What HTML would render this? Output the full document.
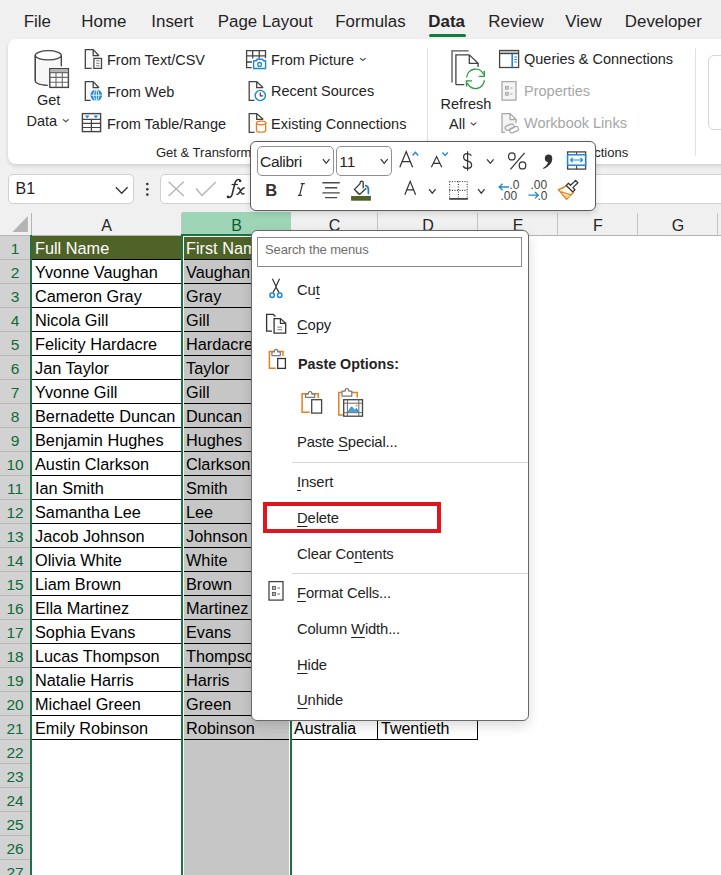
<!DOCTYPE html>
<html><head><meta charset="utf-8"><style>
html,body{margin:0;padding:0}
body{width:721px;height:875px;overflow:hidden;position:relative;background:#f0f0f0;font-family:"Liberation Sans", sans-serif}
.t{position:absolute;white-space:nowrap;line-height:1}
.b{position:absolute}
u{text-decoration-thickness:1px;text-underline-offset:2.5px}
</style></head><body>
<div class="t" style="left:23.8px;top:13.5px;font-size:16.9px;color:#242424;font-weight:400;">File</div>
<div class="t" style="left:81.3px;top:13.5px;font-size:16.9px;color:#242424;font-weight:400;">Home</div>
<div class="t" style="left:151.3px;top:13.5px;font-size:16.9px;color:#242424;font-weight:400;">Insert</div>
<div class="t" style="left:217.8px;top:13.5px;font-size:16.9px;color:#242424;font-weight:400;">Page Layout</div>
<div class="t" style="left:335.3px;top:13.5px;font-size:16.9px;color:#242424;font-weight:400;">Formulas</div>
<div class="t" style="left:428.3px;top:13.5px;font-size:16.9px;color:#242424;font-weight:700;">Data</div>
<div class="t" style="left:488.3px;top:13.5px;font-size:16.9px;color:#242424;font-weight:400;">Review</div>
<div class="t" style="left:565.3px;top:13.5px;font-size:16.9px;color:#242424;font-weight:400;">View</div>
<div class="t" style="left:624.8px;top:13.5px;font-size:16.9px;color:#242424;font-weight:400;">Developer</div>
<div class="b" style="left:429px;top:34px;width:37px;height:3px;background:#107c41;border-radius:2px"></div>
<div class="b" style="left:8px;top:39px;width:760px;height:125px;background:#fff;border-radius:8px;box-shadow:0 2px 4px rgba(0,0,0,0.13)"></div>
<div class="t" style="left:37.0px;top:93.2px;font-size:14.5px;color:#242424;font-weight:400;">Get</div>
<div class="t" style="left:26.5px;top:113.7px;font-size:14.5px;color:#242424;font-weight:400;">Data</div>
<div class="t" style="left:107.0px;top:52.7px;font-size:14.5px;color:#242424;font-weight:400;">From Text/CSV</div>
<div class="t" style="left:107.0px;top:85.0px;font-size:14.5px;color:#242424;font-weight:400;">From Web</div>
<div class="t" style="left:107.0px;top:116.7px;font-size:14.5px;color:#242424;font-weight:400;">From Table/Range</div>
<div class="t" style="left:271.0px;top:52.7px;font-size:14.5px;color:#242424;font-weight:400;">From Picture</div>
<div class="t" style="left:271.0px;top:84.4px;font-size:14.5px;color:#242424;font-weight:400;">Recent Sources</div>
<div class="t" style="left:271.0px;top:116.9px;font-size:14.5px;color:#242424;font-weight:400;">Existing Connections</div>
<div class="t" style="left:156.0px;top:145.7px;font-size:13px;color:#242424;font-weight:400;">Get &amp; Transform Data</div>
<div class="t" style="left:440.5px;top:97.0px;font-size:14.5px;color:#242424;font-weight:400;">Refresh</div>
<div class="t" style="left:449.0px;top:116.7px;font-size:14.5px;color:#242424;font-weight:400;">All</div>
<div class="t" style="left:524.0px;top:51.9px;font-size:14.5px;color:#242424;font-weight:400;">Queries &amp; Connections</div>
<div class="t" style="left:524.0px;top:84.2px;font-size:14.5px;color:#a6a6a6;font-weight:400;">Properties</div>
<div class="t" style="left:524.0px;top:116.2px;font-size:14.5px;color:#a6a6a6;font-weight:400;">Workbook Links</div>
<div class="t" style="left:494.5px;top:145.5px;font-size:13px;color:#242424;font-weight:400;">Queries &amp; Connections</div>
<div class="b" style="left:427px;top:48px;width:1px;height:108px;background:#e1e1e1"></div>
<div class="b" style="left:695px;top:48px;width:1px;height:108px;background:#e1e1e1"></div>
<div class="b" style="left:708px;top:55px;width:40px;height:73px;border:1px solid #d6d6d6;border-radius:6px;background:#fff"></div>
<svg class="b" style="left:0px;top:0px;" width="721" height="875" viewBox="0 0 721 875"><path d="M35.3 55.3 V81 Q35.6 84.6 47.7 85.3 M61.3 55.3 V66.3" fill="none" stroke="#444" stroke-width="1.3"/><path d="M35.3 55.3 V81 Q35.6 84.6 47.7 85.3 L49.5 85.3 V68.5 L61.3 68.5 V55.3 Z" fill="#f7f7f7" stroke="none"/><path d="M35.3 55.3 V81 Q35.6 84.6 47.7 85.3 M61.3 55.3 V66.3" fill="none" stroke="#444" stroke-width="1.3"/><ellipse cx="48.3" cy="55.3" rx="13" ry="4.6" fill="#fff" stroke="#444" stroke-width="1.3"/><rect x="49.8" y="68.7" width="18.6" height="18.7" fill="#fff" stroke="#444" stroke-width="1.4"/><rect x="50.5" y="69.4" width="17.2" height="3" fill="#b5b5b5"/><path d="M50 72.6 H68.2 M50 77.4 H68.2 M50 82.2 H68.2 M56 72.6 V87 M62.3 72.6 V87" stroke="#6a6a6a" stroke-width="1.1" fill="none"/><path d="M85.3 68.3 V49.6 H93.2 L99 55.7 V68.3 H85.3 Z" fill="#f9f9f9" stroke="none"/><path d="M91.7 68.3 H85.3 V49.6 H93.2 L99 55.7 M93.2 49.6 V55.7 H99" fill="none" stroke="#444" stroke-width="1.3" stroke-linejoin="miter"/><rect x="93.9" y="58.4" width="7.6" height="10" fill="#fff" stroke="#444" stroke-width="1.3"/><path d="M96.2 60.8 H99.5 M96.2 63.3 H99.5 M96.2 65.8 H99.5" stroke="#777" stroke-width="1.1"/><path d="M85.3 100.3 V81.6 H93.2 L99 87.7 V100.3 H85.3 Z" fill="#f9f9f9" stroke="none"/><path d="M90.7 100.3 H85.3 V81.6 H93.2 L99 87.7 M93.2 81.6 V87.7 H99" fill="none" stroke="#444" stroke-width="1.3" stroke-linejoin="miter"/><circle cx="96.3" cy="95.2" r="5.8" fill="#1f86d4"/><path d="M90.8 95.2 H101.8 M96.3 89.6 V100.8" stroke="#fff" stroke-width="0.9"/><ellipse cx="96.3" cy="95.2" rx="2.6" ry="5.6" fill="none" stroke="#fff" stroke-width="0.9"/><rect x="82.4" y="113.6" width="18.2" height="18" fill="#fff" stroke="#444" stroke-width="1.4"/><path d="M82.4 119.3 H100.6 M82.4 123.4 H100.6 M82.4 127.5 H100.6 M91.4 119.3 V131.6" stroke="#444" stroke-width="1.2"/><path d="M84.8 115.6 H89.6 L87.2 118.2 Z M93.5 115.6 H98.3 L95.9 118.2 Z" fill="#1f86d4"/><path d="M251.7 67.6 H246.6 V50.6 H265.5 V58 M246.6 55.9 H265.5 M252.7 50.6 V58.5 M259.2 50.6 V58.5 M246.6 62 H252" fill="none" stroke="#444" stroke-width="1.3"/><path d="M253.6 60.8 H256.3 L257.2 59.2 H262.5 L263.4 60.8 H265.6 V68.5 H253.6 Z" fill="#fff" stroke="#1f86d4" stroke-width="1.4" stroke-linejoin="round"/><circle cx="259.6" cy="64.4" r="1.9" fill="none" stroke="#1f86d4" stroke-width="1.3"/><path d="M249.2 100.3 V81.6 H256.7 L263.2 87.7 V100.3 H249.2 Z" fill="#f9f9f9" stroke="none"/><path d="M254.5 100.3 H249.2 V81.6 H256.7 L263.2 87.7 M256.7 81.6 V87.7 H263.2" fill="none" stroke="#444" stroke-width="1.3" stroke-linejoin="miter"/><circle cx="260.3" cy="95.5" r="5.1" fill="#fff" stroke="#1f86d4" stroke-width="1.4"/><path d="M260.3 92.5 V95.8 H263" fill="none" stroke="#444" stroke-width="1.2"/><path d="M249.2 132.3 V113.6 H256.7 L263.2 119.3 V132.3 H249.2 Z" fill="#f9f9f9" stroke="none"/><path d="M254.5 132.3 H249.2 V113.6 H256.7 L263.2 119.3 M256.7 113.6 V119.3 H263.2" fill="none" stroke="#444" stroke-width="1.3" stroke-linejoin="miter"/><path d="M256.5 123 V130.5 Q256.5 132.2 261.1 132.2 Q265.7 132.2 265.7 130.5 V123 Z" fill="#fff" stroke="#e67e22" stroke-width="1.3"/><ellipse cx="261.1" cy="123" rx="4.6" ry="1.8" fill="#fff" stroke="#e67e22" stroke-width="1.3"/><path d="M452 82.5 V50.9 H468.6" fill="none" stroke="#555" stroke-width="1.3"/><path d="M455.9 84.7 V54.8 H469.3 L478.1 63.3 V67 M469.3 54.8 V63.3 H478.1 M455.9 84.7 H464.3" fill="none" stroke="#444" stroke-width="1.3"/><path d="M466.7 77.5 A8.8 8.8 0 0 1 483.6 74.5 M484.3 80.3 A8.8 8.8 0 0 1 467.3 83" fill="none" stroke="#2e9a48" stroke-width="1.4"/><path d="M484.3 70.8 V76.4 H478.8 M466.5 86.5 V80.9 H472" fill="none" stroke="#2e9a48" stroke-width="1.4"/><rect x="499.6" y="50.5" width="19" height="17" fill="#fff" stroke="#444" stroke-width="1.3"/><rect x="500.3" y="51.2" width="17.6" height="2.3" fill="#b5b5b5"/><path d="M499.6 53.6 H518.6" stroke="#444" stroke-width="1.2"/><path d="M512.2 54 V67.3" stroke="#1f86d4" stroke-width="1.6"/><path d="M514.3 57 H516.9 M514.3 59.5 H516.9 M514.3 62 H516.9" stroke="#1f86d4" stroke-width="1.1"/><rect x="502" y="81.6" width="14" height="18.5" fill="#f4f4f4" stroke="#a8a8a8" stroke-width="1.3"/><rect x="505.5" y="86.4" width="2.8" height="2.8" fill="#ccc" stroke="#a8a8a8" stroke-width="0.9"/><rect x="505.5" y="92.4" width="2.8" height="2.8" fill="#ccc" stroke="#a8a8a8" stroke-width="0.9"/><path d="M510.2 88 H512.6 M510.2 94 H512.6" stroke="#a8a8a8" stroke-width="1.1"/><path d="M505 132.3 H502 V113.6 H510.1 L516.1 119.5 V123.3 M510.1 113.6 V119.5 H516.1" fill="#f4f4f4" stroke="#a8a8a8" stroke-width="1.3"/><rect x="-4.6" y="-2.3" width="9.2" height="4.6" rx="2.3" fill="none" stroke="#a8a8a8" stroke-width="1.2" transform="translate(509.6 127.1) rotate(-22)"/><rect x="-4.6" y="-2.3" width="9.2" height="4.6" rx="2.3" fill="none" stroke="#a8a8a8" stroke-width="1.2" transform="translate(514 129.6) rotate(-22)"/><path d="M63.0 119.3 L65.8 121.7 L68.6 119.3" fill="none" stroke="#444" stroke-width="1.1"/><path d="M360.0 58.099999999999994 L362.8 60.5 L365.6 58.099999999999994" fill="none" stroke="#444" stroke-width="1.1"/><path d="M470.7 122.6 L473.5 125.0 L476.3 122.6" fill="none" stroke="#444" stroke-width="1.1"/></svg>
<div class="b" style="left:8px;top:174px;width:126px;height:30px;background:#fff;border:1px solid #d1d1d1;border-radius:5px;box-sizing:border-box"></div>
<div class="t" style="left:15.5px;top:181.3px;font-size:16px;color:#242424;font-weight:400;">B1</div>
<div class="b" style="left:160px;top:174px;width:600px;height:30px;background:#fff;border:1px solid #d1d1d1;border-radius:5px;box-sizing:border-box"></div>
<svg class="b" style="left:0px;top:0px;" width="721" height="875" viewBox="0 0 721 875"><path d="M115.8 187.2 L121.7 193.2 L127.6 187.2" fill="none" stroke="#333" stroke-width="1.3"/><circle cx="147.3" cy="184" r="1.3" fill="#333"/><circle cx="147.3" cy="189.3" r="1.3" fill="#333"/><circle cx="147.3" cy="194.6" r="1.3" fill="#333"/><path d="M168.6 181.8 L183.8 196 M183.8 181.8 L168.6 196" stroke="#b3b3b3" stroke-width="1.3"/><path d="M196 188.5 L202 195.5 L215.8 182" fill="none" stroke="#b3b3b3" stroke-width="1.3"/></svg>
<svg class="b" style="left:0px;top:0px;" width="721" height="875" viewBox="0 0 721 875"><path d="M240.6 181.4 Q240.4 179.4 238.4 179.5 Q235.6 179.7 234.6 184.5 L232.3 193.8 Q231.3 197.6 228.6 197.6 Q227.5 197.6 227.4 196.6" fill="none" stroke="#2b2b2b" stroke-width="1.5"/><circle cx="240.1" cy="180.9" r="1.2" fill="#2b2b2b"/><circle cx="228" cy="196.8" r="1.2" fill="#2b2b2b"/><path d="M231.6 184.5 H237.8" stroke="#2b2b2b" stroke-width="1.2"/><path d="M237.3 188.4 Q239 187.3 239.9 189.5 L241.4 193 Q242.3 194.8 244.5 193.5 M244.8 188.2 Q243.4 187.5 242.2 189 L238.6 193.5 Q237.5 194.8 236.5 194.2" fill="none" stroke="#2b2b2b" stroke-width="1.4"/></svg>
<div class="b" style="left:0px;top:212px;width:721px;height:24px;background:#f0f0f0"></div>
<div class="b" style="left:181px;top:213px;width:1px;height:22px;background:#c4c4c4"></div>
<div class="t" style="left:31px;width:151px;top:217.5px;font-size:16px;color:#242424;text-align:center">A</div>
<div class="b" style="left:182px;top:212px;width:109px;height:22px;background:#9fd5b7"></div>
<div class="t" style="left:182px;width:109px;top:217.5px;font-size:16px;color:#0f5c30;text-align:center">B</div>
<div class="b" style="left:377px;top:213px;width:1px;height:22px;background:#c4c4c4"></div>
<div class="t" style="left:291px;width:87px;top:217.5px;font-size:16px;color:#242424;text-align:center">C</div>
<div class="b" style="left:477px;top:213px;width:1px;height:22px;background:#c4c4c4"></div>
<div class="t" style="left:378px;width:100px;top:217.5px;font-size:16px;color:#242424;text-align:center">D</div>
<div class="b" style="left:557px;top:213px;width:1px;height:22px;background:#c4c4c4"></div>
<div class="t" style="left:478px;width:80px;top:217.5px;font-size:16px;color:#242424;text-align:center">E</div>
<div class="b" style="left:637px;top:213px;width:1px;height:22px;background:#c4c4c4"></div>
<div class="t" style="left:558px;width:80px;top:217.5px;font-size:16px;color:#242424;text-align:center">F</div>
<div class="b" style="left:717px;top:213px;width:1px;height:22px;background:#c4c4c4"></div>
<div class="t" style="left:638px;width:80px;top:217.5px;font-size:16px;color:#242424;text-align:center">G</div>
<div class="b" style="left:799px;top:213px;width:1px;height:22px;background:#c4c4c4"></div>
<div class="b" style="left:0px;top:235px;width:721px;height:1px;background:#b4b4b4"></div>
<svg class="b" style="left:0px;top:0px;" width="40" height="240" viewBox="0 0 40 240"><path d="M27.9 216.1 V232 H12.5 Z" fill="#b4b4b4"/></svg>
<div class="b" style="left:31px;top:213px;width:1px;height:22px;background:#b4b4b4"></div>
<div class="b" style="left:0px;top:236px;width:30px;height:640px;background:#d2d2d2"></div>
<div class="b" style="left:32px;top:236px;width:721px;height:640px;background:#fff"></div>
<div class="b" style="left:183px;top:236px;width:107px;height:640px;background:#fff"></div>
<div class="b" style="left:184px;top:237px;width:105px;height:640px;background:#c6c6c6"></div>
<div class="b" style="left:0px;top:259px;width:30px;height:1px;background:#b8b8b8"></div>
<div class="t" style="left:0px;width:30px;top:241.2px;font-size:15.5px;color:#0e6b38;text-align:center">1</div>
<div class="b" style="left:32px;top:236px;width:150px;height:23px;background:#4f6228"></div>
<div class="b" style="left:184px;top:237px;width:105px;height:22px;background:#4f6228"></div>
<div class="b" style="left:32px;top:259px;width:150px;height:1px;background:#000"></div>
<div class="b" style="left:184px;top:259px;width:105px;height:1px;background:#000"></div>
<div class="t" style="left:35.0px;top:240.3px;font-size:16.3px;color:#fff;font-weight:400;">Full Name</div>
<div class="t" style="left:186px;width:104px;overflow:hidden;top:240.3px;font-size:16.3px;color:#fff">First Name</div>
<div class="b" style="left:0px;top:283px;width:30px;height:1px;background:#b8b8b8"></div>
<div class="t" style="left:0px;width:30px;top:265.2px;font-size:15.5px;color:#0e6b38;text-align:center">2</div>
<div class="b" style="left:32px;top:283px;width:150px;height:1px;background:#000"></div>
<div class="b" style="left:184px;top:283px;width:105px;height:1px;background:#000"></div>
<div class="t" style="left:35.0px;top:264.3px;font-size:16.3px;color:#000;font-weight:400;">Yvonne Vaughan</div>
<div class="t" style="left:186px;width:104px;overflow:hidden;top:264.3px;font-size:16.3px;color:#000">Vaughan</div>
<div class="b" style="left:0px;top:307px;width:30px;height:1px;background:#b8b8b8"></div>
<div class="t" style="left:0px;width:30px;top:289.2px;font-size:15.5px;color:#0e6b38;text-align:center">3</div>
<div class="b" style="left:32px;top:307px;width:150px;height:1px;background:#000"></div>
<div class="b" style="left:184px;top:307px;width:105px;height:1px;background:#000"></div>
<div class="t" style="left:35.0px;top:288.3px;font-size:16.3px;color:#000;font-weight:400;">Cameron Gray</div>
<div class="t" style="left:186px;width:104px;overflow:hidden;top:288.3px;font-size:16.3px;color:#000">Gray</div>
<div class="b" style="left:0px;top:331px;width:30px;height:1px;background:#b8b8b8"></div>
<div class="t" style="left:0px;width:30px;top:313.2px;font-size:15.5px;color:#0e6b38;text-align:center">4</div>
<div class="b" style="left:32px;top:331px;width:150px;height:1px;background:#000"></div>
<div class="b" style="left:184px;top:331px;width:105px;height:1px;background:#000"></div>
<div class="t" style="left:35.0px;top:312.3px;font-size:16.3px;color:#000;font-weight:400;">Nicola Gill</div>
<div class="t" style="left:186px;width:104px;overflow:hidden;top:312.3px;font-size:16.3px;color:#000">Gill</div>
<div class="b" style="left:0px;top:355px;width:30px;height:1px;background:#b8b8b8"></div>
<div class="t" style="left:0px;width:30px;top:337.2px;font-size:15.5px;color:#0e6b38;text-align:center">5</div>
<div class="b" style="left:32px;top:355px;width:150px;height:1px;background:#000"></div>
<div class="b" style="left:184px;top:355px;width:105px;height:1px;background:#000"></div>
<div class="t" style="left:35.0px;top:336.3px;font-size:16.3px;color:#000;font-weight:400;">Felicity Hardacre</div>
<div class="t" style="left:186px;width:104px;overflow:hidden;top:336.3px;font-size:16.3px;color:#000">Hardacre</div>
<div class="b" style="left:0px;top:379px;width:30px;height:1px;background:#b8b8b8"></div>
<div class="t" style="left:0px;width:30px;top:361.2px;font-size:15.5px;color:#0e6b38;text-align:center">6</div>
<div class="b" style="left:32px;top:379px;width:150px;height:1px;background:#000"></div>
<div class="b" style="left:184px;top:379px;width:105px;height:1px;background:#000"></div>
<div class="t" style="left:35.0px;top:360.3px;font-size:16.3px;color:#000;font-weight:400;">Jan Taylor</div>
<div class="t" style="left:186px;width:104px;overflow:hidden;top:360.3px;font-size:16.3px;color:#000">Taylor</div>
<div class="b" style="left:0px;top:403px;width:30px;height:1px;background:#b8b8b8"></div>
<div class="t" style="left:0px;width:30px;top:385.2px;font-size:15.5px;color:#0e6b38;text-align:center">7</div>
<div class="b" style="left:32px;top:403px;width:150px;height:1px;background:#000"></div>
<div class="b" style="left:184px;top:403px;width:105px;height:1px;background:#000"></div>
<div class="t" style="left:35.0px;top:384.3px;font-size:16.3px;color:#000;font-weight:400;">Yvonne Gill</div>
<div class="t" style="left:186px;width:104px;overflow:hidden;top:384.3px;font-size:16.3px;color:#000">Gill</div>
<div class="b" style="left:0px;top:427px;width:30px;height:1px;background:#b8b8b8"></div>
<div class="t" style="left:0px;width:30px;top:409.2px;font-size:15.5px;color:#0e6b38;text-align:center">8</div>
<div class="b" style="left:32px;top:427px;width:150px;height:1px;background:#000"></div>
<div class="b" style="left:184px;top:427px;width:105px;height:1px;background:#000"></div>
<div class="t" style="left:35.0px;top:408.3px;font-size:16.3px;color:#000;font-weight:400;">Bernadette Duncan</div>
<div class="t" style="left:186px;width:104px;overflow:hidden;top:408.3px;font-size:16.3px;color:#000">Duncan</div>
<div class="b" style="left:0px;top:451px;width:30px;height:1px;background:#b8b8b8"></div>
<div class="t" style="left:0px;width:30px;top:433.2px;font-size:15.5px;color:#0e6b38;text-align:center">9</div>
<div class="b" style="left:32px;top:451px;width:150px;height:1px;background:#000"></div>
<div class="b" style="left:184px;top:451px;width:105px;height:1px;background:#000"></div>
<div class="t" style="left:35.0px;top:432.3px;font-size:16.3px;color:#000;font-weight:400;">Benjamin Hughes</div>
<div class="t" style="left:186px;width:104px;overflow:hidden;top:432.3px;font-size:16.3px;color:#000">Hughes</div>
<div class="b" style="left:0px;top:475px;width:30px;height:1px;background:#b8b8b8"></div>
<div class="t" style="left:0px;width:30px;top:457.2px;font-size:15.5px;color:#0e6b38;text-align:center">10</div>
<div class="b" style="left:32px;top:475px;width:150px;height:1px;background:#000"></div>
<div class="b" style="left:184px;top:475px;width:105px;height:1px;background:#000"></div>
<div class="t" style="left:35.0px;top:456.3px;font-size:16.3px;color:#000;font-weight:400;">Austin Clarkson</div>
<div class="t" style="left:186px;width:104px;overflow:hidden;top:456.3px;font-size:16.3px;color:#000">Clarkson</div>
<div class="b" style="left:0px;top:499px;width:30px;height:1px;background:#b8b8b8"></div>
<div class="t" style="left:0px;width:30px;top:481.2px;font-size:15.5px;color:#0e6b38;text-align:center">11</div>
<div class="b" style="left:32px;top:499px;width:150px;height:1px;background:#000"></div>
<div class="b" style="left:184px;top:499px;width:105px;height:1px;background:#000"></div>
<div class="t" style="left:35.0px;top:480.3px;font-size:16.3px;color:#000;font-weight:400;">Ian Smith</div>
<div class="t" style="left:186px;width:104px;overflow:hidden;top:480.3px;font-size:16.3px;color:#000">Smith</div>
<div class="b" style="left:0px;top:523px;width:30px;height:1px;background:#b8b8b8"></div>
<div class="t" style="left:0px;width:30px;top:505.2px;font-size:15.5px;color:#0e6b38;text-align:center">12</div>
<div class="b" style="left:32px;top:523px;width:150px;height:1px;background:#000"></div>
<div class="b" style="left:184px;top:523px;width:105px;height:1px;background:#000"></div>
<div class="t" style="left:35.0px;top:504.3px;font-size:16.3px;color:#000;font-weight:400;">Samantha Lee</div>
<div class="t" style="left:186px;width:104px;overflow:hidden;top:504.3px;font-size:16.3px;color:#000">Lee</div>
<div class="b" style="left:0px;top:547px;width:30px;height:1px;background:#b8b8b8"></div>
<div class="t" style="left:0px;width:30px;top:529.2px;font-size:15.5px;color:#0e6b38;text-align:center">13</div>
<div class="b" style="left:32px;top:547px;width:150px;height:1px;background:#000"></div>
<div class="b" style="left:184px;top:547px;width:105px;height:1px;background:#000"></div>
<div class="t" style="left:35.0px;top:528.3px;font-size:16.3px;color:#000;font-weight:400;">Jacob Johnson</div>
<div class="t" style="left:186px;width:104px;overflow:hidden;top:528.3px;font-size:16.3px;color:#000">Johnson</div>
<div class="b" style="left:0px;top:571px;width:30px;height:1px;background:#b8b8b8"></div>
<div class="t" style="left:0px;width:30px;top:553.2px;font-size:15.5px;color:#0e6b38;text-align:center">14</div>
<div class="b" style="left:32px;top:571px;width:150px;height:1px;background:#000"></div>
<div class="b" style="left:184px;top:571px;width:105px;height:1px;background:#000"></div>
<div class="t" style="left:35.0px;top:552.3px;font-size:16.3px;color:#000;font-weight:400;">Olivia White</div>
<div class="t" style="left:186px;width:104px;overflow:hidden;top:552.3px;font-size:16.3px;color:#000">White</div>
<div class="b" style="left:0px;top:595px;width:30px;height:1px;background:#b8b8b8"></div>
<div class="t" style="left:0px;width:30px;top:577.2px;font-size:15.5px;color:#0e6b38;text-align:center">15</div>
<div class="b" style="left:32px;top:595px;width:150px;height:1px;background:#000"></div>
<div class="b" style="left:184px;top:595px;width:105px;height:1px;background:#000"></div>
<div class="t" style="left:35.0px;top:576.3px;font-size:16.3px;color:#000;font-weight:400;">Liam Brown</div>
<div class="t" style="left:186px;width:104px;overflow:hidden;top:576.3px;font-size:16.3px;color:#000">Brown</div>
<div class="b" style="left:0px;top:619px;width:30px;height:1px;background:#b8b8b8"></div>
<div class="t" style="left:0px;width:30px;top:601.2px;font-size:15.5px;color:#0e6b38;text-align:center">16</div>
<div class="b" style="left:32px;top:619px;width:150px;height:1px;background:#000"></div>
<div class="b" style="left:184px;top:619px;width:105px;height:1px;background:#000"></div>
<div class="t" style="left:35.0px;top:600.3px;font-size:16.3px;color:#000;font-weight:400;">Ella Martinez</div>
<div class="t" style="left:186px;width:104px;overflow:hidden;top:600.3px;font-size:16.3px;color:#000">Martinez</div>
<div class="b" style="left:0px;top:643px;width:30px;height:1px;background:#b8b8b8"></div>
<div class="t" style="left:0px;width:30px;top:625.2px;font-size:15.5px;color:#0e6b38;text-align:center">17</div>
<div class="b" style="left:32px;top:643px;width:150px;height:1px;background:#000"></div>
<div class="b" style="left:184px;top:643px;width:105px;height:1px;background:#000"></div>
<div class="t" style="left:35.0px;top:624.3px;font-size:16.3px;color:#000;font-weight:400;">Sophia Evans</div>
<div class="t" style="left:186px;width:104px;overflow:hidden;top:624.3px;font-size:16.3px;color:#000">Evans</div>
<div class="b" style="left:0px;top:667px;width:30px;height:1px;background:#b8b8b8"></div>
<div class="t" style="left:0px;width:30px;top:649.2px;font-size:15.5px;color:#0e6b38;text-align:center">18</div>
<div class="b" style="left:32px;top:667px;width:150px;height:1px;background:#000"></div>
<div class="b" style="left:184px;top:667px;width:105px;height:1px;background:#000"></div>
<div class="t" style="left:35.0px;top:648.3px;font-size:16.3px;color:#000;font-weight:400;">Lucas Thompson</div>
<div class="t" style="left:186px;width:104px;overflow:hidden;top:648.3px;font-size:16.3px;color:#000">Thompson</div>
<div class="b" style="left:0px;top:691px;width:30px;height:1px;background:#b8b8b8"></div>
<div class="t" style="left:0px;width:30px;top:673.2px;font-size:15.5px;color:#0e6b38;text-align:center">19</div>
<div class="b" style="left:32px;top:691px;width:150px;height:1px;background:#000"></div>
<div class="b" style="left:184px;top:691px;width:105px;height:1px;background:#000"></div>
<div class="t" style="left:35.0px;top:672.3px;font-size:16.3px;color:#000;font-weight:400;">Natalie Harris</div>
<div class="t" style="left:186px;width:104px;overflow:hidden;top:672.3px;font-size:16.3px;color:#000">Harris</div>
<div class="b" style="left:0px;top:715px;width:30px;height:1px;background:#b8b8b8"></div>
<div class="t" style="left:0px;width:30px;top:697.2px;font-size:15.5px;color:#0e6b38;text-align:center">20</div>
<div class="b" style="left:32px;top:715px;width:150px;height:1px;background:#000"></div>
<div class="b" style="left:184px;top:715px;width:105px;height:1px;background:#000"></div>
<div class="t" style="left:35.0px;top:696.3px;font-size:16.3px;color:#000;font-weight:400;">Michael Green</div>
<div class="t" style="left:186px;width:104px;overflow:hidden;top:696.3px;font-size:16.3px;color:#000">Green</div>
<div class="b" style="left:0px;top:739px;width:30px;height:1px;background:#b8b8b8"></div>
<div class="t" style="left:0px;width:30px;top:721.2px;font-size:15.5px;color:#0e6b38;text-align:center">21</div>
<div class="b" style="left:32px;top:739px;width:150px;height:1px;background:#000"></div>
<div class="b" style="left:184px;top:739px;width:105px;height:1px;background:#000"></div>
<div class="t" style="left:35.0px;top:720.3px;font-size:16.3px;color:#000;font-weight:400;">Emily Robinson</div>
<div class="t" style="left:186px;width:104px;overflow:hidden;top:720.3px;font-size:16.3px;color:#000">Robinson</div>
<div class="b" style="left:0px;top:763px;width:30px;height:1px;background:#b8b8b8"></div>
<div class="t" style="left:0px;width:30px;top:745.2px;font-size:15.5px;color:#0e6b38;text-align:center">22</div>
<div class="b" style="left:0px;top:787px;width:30px;height:1px;background:#b8b8b8"></div>
<div class="t" style="left:0px;width:30px;top:769.2px;font-size:15.5px;color:#0e6b38;text-align:center">23</div>
<div class="b" style="left:0px;top:811px;width:30px;height:1px;background:#b8b8b8"></div>
<div class="t" style="left:0px;width:30px;top:793.2px;font-size:15.5px;color:#0e6b38;text-align:center">24</div>
<div class="b" style="left:0px;top:835px;width:30px;height:1px;background:#b8b8b8"></div>
<div class="t" style="left:0px;width:30px;top:817.2px;font-size:15.5px;color:#0e6b38;text-align:center">25</div>
<div class="b" style="left:0px;top:859px;width:30px;height:1px;background:#b8b8b8"></div>
<div class="t" style="left:0px;width:30px;top:841.2px;font-size:15.5px;color:#0e6b38;text-align:center">26</div>
<div class="b" style="left:0px;top:883px;width:30px;height:1px;background:#b8b8b8"></div>
<div class="t" style="left:0px;width:30px;top:865.2px;font-size:15.5px;color:#0e6b38;text-align:center">27</div>
<div class="b" style="left:291px;top:715px;width:187px;height:25px;border:1px solid #000;box-sizing:border-box;background:#fff"></div>
<div class="b" style="left:377px;top:715px;width:1px;height:25px;background:#000"></div>
<div class="t" style="left:294.0px;top:720.6px;font-size:16px;color:#000;font-weight:400;">Australia</div>
<div class="t" style="left:381.0px;top:720.6px;font-size:16px;color:#000;font-weight:400;">Twentieth</div>
<div class="b" style="left:30px;top:235px;width:2px;height:640px;background:#1a7342"></div>
<div class="b" style="left:181px;top:234px;width:111px;height:2px;background:#1a7342"></div>
<div class="b" style="left:181px;top:234px;width:2px;height:641px;background:#1a7342"></div>
<div class="b" style="left:290px;top:234px;width:2px;height:641px;background:#1a7342"></div>
<div class="b" style="left:250px;top:141px;width:346px;height:70px;background:#fff;border:1px solid #5c5c5c;border-radius:6px;box-sizing:border-box;box-shadow:0 2px 6px rgba(0,0,0,0.15)"></div>
<div class="b" style="left:257px;top:146px;width:77px;height:30px;border:1px solid #8f8f8f;border-radius:5px;box-sizing:border-box"></div>
<div class="t" style="left:260.0px;top:154.1px;font-size:15.5px;color:#242424;font-weight:400;letter-spacing:-0.3px">Calibri</div>
<div class="b" style="left:336px;top:146px;width:56px;height:30px;border:1px solid #8f8f8f;border-radius:5px;box-sizing:border-box"></div>
<div class="t" style="left:339.3px;top:154.1px;font-size:15.5px;color:#242424;font-weight:400;">11</div>
<svg class="b" style="left:0px;top:0px;" width="721" height="875" viewBox="0 0 721 875"><path d="M322.9 159.1 L326.2 163.29999999999998 L329.5 159.1" fill="none" stroke="#333" stroke-width="1.2"/><path d="M380.7 159.1 L384.2 163.29999999999998 L387.7 159.1" fill="none" stroke="#333" stroke-width="1.2"/><path d="M399.8 167.3 L406.2 151.6 L412.6 167.3 M402.2 161.6 H410.2" fill="none" stroke="#333" stroke-width="1.25"/><path d="M412.6 155.5 L415.4 152.4 L418.2 155.5" fill="none" stroke="#1f86d4" stroke-width="1.4"/><path d="M431.4 167.3 L436.6 156.6 L441.8 167.3 M433.2 163.3 H440" fill="none" stroke="#333" stroke-width="1.2"/><path d="M442.4 152.6 L445.1 155.4 L447.8 152.6" fill="none" stroke="#1f86d4" stroke-width="1.4"/><path d="M487.0 159.3 L490.3 163.3 L493.6 159.3" fill="none" stroke="#333" stroke-width="1.2"/><path d="M355.2 189.8 L358.5 193.8 L361.8 189.8" fill="none" stroke="#333" stroke-width="1.2"/><path d="M429.0 189.2 L432.3 193.2 L435.6 189.2" fill="none" stroke="#333" stroke-width="1.2"/><path d="M478.0 189.2 L481.3 193.2 L484.6 189.2" fill="none" stroke="#333" stroke-width="1.2"/><rect x="567.6" y="151.9" width="18" height="17.2" fill="#fff" stroke="#444" stroke-width="1.3"/><path d="M576.6 152 V169" stroke="#444" stroke-width="1.1"/><rect x="567.6" y="154.8" width="18" height="10.4" fill="#fff" stroke="#1f86d4" stroke-width="1.5"/><path d="M570.6 160 H582.6 M572.8 157.8 L570.6 160 L572.8 162.2 M580.4 157.8 L582.6 160 L580.4 162.2" fill="none" stroke="#1f86d4" stroke-width="1.2"/><path d="M322.4 182.8 H339.8 M325 187.7 H337.2 M322.4 192.9 H339.8 M325 197.6 H337.2" stroke="#4a4a4a" stroke-width="1.4"/><path d="M360.1 183.6 L354.4 189.4 L359.7 194.5 L366.2 188.3" fill="#fafafa" stroke="#333" stroke-width="1.25" stroke-linejoin="miter"/><path d="M360.1 183.8 V182.6 Q360.3 181 361.7 181 Q363.2 181 363.2 182.6 V188.3" fill="none" stroke="#333" stroke-width="1.25"/><path d="M365.5 185.6 Q368.4 186 368.4 189.5 V193.4" fill="none" stroke="#1f7fd0" stroke-width="1.7" stroke-linecap="round"/><rect x="351.1" y="196" width="19.8" height="4.7" fill="#4f6228"/><path d="M404.8 194.8 L410.2 181.3 L415.6 194.8 M406.8 189.8 H413.6" fill="none" stroke="#333" stroke-width="1.2"/><path d="M449.4 181.5 H467.2 M449.4 190.4 H467.2 M449.6 181.5 V197.6 M458.4 181.5 V197.6 M467.2 181.5 V197.6" fill="none" stroke="#444" stroke-width="1.1" stroke-dasharray="1.1 1.4"/><path d="M449.2 198.9 H467.9" stroke="#3a3a3a" stroke-width="1.7"/><path d="M509 187 H499.2 M502.6 183.8 L499.2 187 L502.6 190.2" fill="none" stroke="#1f86d4" stroke-width="1.3"/><path d="M537.8 195.2 H528.4 M535 192 L538.3 195.2 L535 198.4" fill="none" stroke="#1f86d4" stroke-width="1.3"/><path d="M558.3 189.6 Q562.5 188.6 566.3 185.6 L573.4 192.6 Q569.6 196 566.6 199.3 Z" fill="#fff" stroke="#e67e22" stroke-width="1.4" stroke-linejoin="round"/><path d="M563.6 194.8 L570.6 195.6 L566.8 198.2 Z" fill="#fbd36b"/><path d="M560.6 191.6 Q566 193.4 571.4 194.8" fill="none" stroke="#e67e22" stroke-width="1.2"/><path d="M566.3 185.4 L568.5 183.2 L570.6 185.3 L575.6 180.4 L577.9 182.7 L572.9 187.6 L575 189.7 L572.8 191.9 Z" fill="#fff" stroke="#333" stroke-width="1.25" stroke-linejoin="round"/></svg>
<div class="t" style="left:265.3px;top:181.8px;font-size:16.5px;color:#333;font-weight:700;">B</div>
<svg class="b" style="left:0px;top:0px;" width="721" height="875" viewBox="0 0 721 875"><path d="M299.6 195.3 L302.6 183.6 M298 195.3 H301.8 M300.8 183.6 H304.8" fill="none" stroke="#333" stroke-width="1.2"/></svg>
<svg class="b" style="left:0px;top:0px;" width="721" height="875" viewBox="0 0 721 875"><path d="M467.6 151.3 V170.7" stroke="#333" stroke-width="1.2"/><path d="M471.4 155.8 Q470.2 153.5 467.4 153.5 Q463.6 153.5 463.6 156.9 Q463.6 159.9 467.5 160.9 Q471.6 162 471.6 165.1 Q471.6 168.4 467.5 168.4 Q464.2 168.4 463.1 165.9" fill="none" stroke="#333" stroke-width="1.25"/><ellipse cx="511.8" cy="156.4" rx="3.3" ry="3.6" fill="none" stroke="#333" stroke-width="1.25"/><ellipse cx="522.5" cy="165.4" rx="3.3" ry="3.6" fill="none" stroke="#333" stroke-width="1.25"/><path d="M524.6 152.8 L510.4 169.4" stroke="#333" stroke-width="1.25"/><path d="M544.8 158.2 Q544.8 154.4 548.6 154.4 Q552.3 154.4 552.3 158.6 Q552.3 165.2 543.6 169 L543 167.9 Q547.3 165.3 548 161.9 Q544.8 161.9 544.8 158.2 Z" fill="#333"/></svg>
<div class="t" style="left:509.3px;top:179.3px;font-size:12px;color:#444;font-weight:400;">.0</div>
<div class="t" style="left:500.5px;top:189.5px;font-size:12px;color:#444;font-weight:400;">.00</div>
<div class="t" style="left:530.5px;top:179.3px;font-size:12px;color:#444;font-weight:400;">.00</div>
<div class="t" style="left:537.5px;top:189.5px;font-size:12px;color:#444;font-weight:400;">.0</div>
<div class="b" style="left:251px;top:230px;width:278px;height:491px;background:#fff;border:1px solid #686868;border-radius:6px;box-sizing:border-box;box-shadow:0 5px 12px rgba(0,0,0,0.14)"></div>
<div class="b" style="left:257px;top:237px;width:265px;height:30px;border:1px solid #8a8a8a;box-sizing:border-box"></div>
<div class="t" style="left:265.0px;top:242.7px;font-size:13px;color:#6e6e6e;font-weight:400;letter-spacing:-0.12px">Search the menus</div>
<div class="t" style="left:297.0px;top:282.8px;font-size:14.8px;color:#242424;font-weight:400;letter-spacing:-0.15px">Cu<u>t</u></div>
<div class="t" style="left:297.0px;top:318.3px;font-size:14.8px;color:#242424;font-weight:400;letter-spacing:-0.15px"><u>C</u>opy</div>
<div class="t" style="left:298.0px;top:357.2px;font-size:14.3px;color:#242424;font-weight:700;">Paste Options:</div>
<div class="t" style="left:297.0px;top:434.8px;font-size:14.8px;color:#242424;font-weight:400;letter-spacing:-0.15px">Paste <u>S</u>pecial...</div>
<div class="b" style="left:292px;top:462px;width:236px;height:1px;background:#d6d6d6"></div>
<div class="t" style="left:297.0px;top:474.8px;font-size:14.8px;color:#242424;font-weight:400;letter-spacing:-0.15px"><u>I</u>nsert</div>
<div class="t" style="left:297.0px;top:510.5px;font-size:14.8px;color:#242424;font-weight:400;letter-spacing:-0.15px"><u>D</u>elete</div>
<div class="t" style="left:297.0px;top:546.5px;font-size:14.8px;color:#242424;font-weight:400;letter-spacing:-0.15px">Clear Co<u>n</u>tents</div>
<div class="b" style="left:292px;top:573px;width:236px;height:1px;background:#d6d6d6"></div>
<div class="t" style="left:297.0px;top:585.5px;font-size:14.8px;color:#242424;font-weight:400;letter-spacing:-0.15px"><u>F</u>ormat Cells...</div>
<div class="t" style="left:297.0px;top:621.6px;font-size:14.8px;color:#242424;font-weight:400;letter-spacing:-0.15px">Column <u>W</u>idth...</div>
<div class="t" style="left:297.0px;top:657.8px;font-size:14.8px;color:#242424;font-weight:400;letter-spacing:-0.15px"><u>H</u>ide</div>
<div class="t" style="left:297.0px;top:693.3px;font-size:14.8px;color:#242424;font-weight:400;letter-spacing:-0.15px"><u>U</u>nhide</div>
<svg class="b" style="left:0px;top:0px;" width="721" height="875" viewBox="0 0 721 875"><path d="M272.4 278.7 L276.2 286.7 L272.9 292.6 M279.5 278.7 L275.8 286.7 L279.1 292.6" fill="none" stroke="#333" stroke-width="1.2"/><circle cx="272.1" cy="295.3" r="2.2" fill="#fff" stroke="#1f86d4" stroke-width="1.5"/><circle cx="279.7" cy="295.3" r="2.2" fill="#fff" stroke="#1f86d4" stroke-width="1.5"/><path d="M272 331.1 H266.6 V314.4 H273.3 L275.5 316.4" fill="#fafafa" stroke="#333" stroke-width="1.3"/><path d="M274.1 333.2 V318.6 H280.4 L285.7 323.3 V333.2 Z" fill="#fff" stroke="#333" stroke-width="1.3"/><path d="M280.4 318.6 V323.3 H285.7" fill="none" stroke="#333" stroke-width="1.2"/><path d="M277.3 327.1 H282.1 M277.3 329.7 H282.1" stroke="#777" stroke-width="1"/><path d="M275.8 368.2 H269.4 V351.6 H283 V356" fill="#fff" stroke="#e67e22" stroke-width="1.5"/><path d="M271.9 355.6 V352.0 H274.3 Q274.3 349.4 276.1 349.4 Q277.90000000000003 349.4 277.90000000000003 352.0 H280.3 V355.6 Z" fill="#fff" stroke="#777" stroke-width="1.2" stroke-linejoin="round"/><rect x="277.7" y="358.5" width="7.7" height="9.9" fill="#fff" stroke="#333" stroke-width="1.3"/><path d="M309.6 412.2 H302.1 V393.8 H318.2 V398" fill="#fff" stroke="#e67e22" stroke-width="1.5"/><path d="M305.5 397.4 V394.1 H308.3 Q308.3 391.5 310.1 391.5 Q311.90000000000003 391.5 311.90000000000003 394.1 H314.7 V397.4 Z" fill="#fff" stroke="#777" stroke-width="1.2" stroke-linejoin="round"/><rect x="311.7" y="399.7" width="9.9" height="13.4" fill="#fff" stroke="#444" stroke-width="1.3"/><path d="M343 415 H338.8 V392.6 H357.2 V397.5" fill="#fff" stroke="#e67e22" stroke-width="1.5"/><path d="M342 396.2 V391.1 H345.09999999999997 Q345.09999999999997 388.5 346.9 388.5 Q348.7 388.5 348.7 391.1 H351.8 V396.2 Z" fill="#fff" stroke="#777" stroke-width="1.2" stroke-linejoin="round"/><rect x="343.7" y="399.7" width="18.8" height="16.5" fill="#fff" stroke="#444" stroke-width="1.3"/><path d="M347.4 399.8 V416.1 M358.8 399.8 V416.1 M343.8 403.2 H362.4 M343.8 412.7 H362.4" stroke="#666" stroke-width="1"/><path d="M348 412 L351.5 406.8 L354.6 410.2 L356.4 408.4 L358.3 412 Z" fill="#4a9fe0"/><path d="M348 412 L351.5 406.8 L354.6 410.2 L356.4 408.4 L358.3 412" fill="none" stroke="#1f86d4" stroke-width="1"/><rect x="355.8" y="405" width="1.6" height="1.2" fill="#e67e22"/><rect x="269" y="581.6" width="14" height="18.5" fill="#fff" stroke="#444" stroke-width="1.3"/><rect x="272.4" y="586.4" width="3" height="3" fill="#bbb" stroke="#555" stroke-width="0.9"/><rect x="272.4" y="592.4" width="3" height="3" fill="#bbb" stroke="#555" stroke-width="0.9"/><path d="M277.3 588 H280 M277.3 594 H280" stroke="#666" stroke-width="1.1"/></svg>
<div class="b" style="left:263px;top:502px;width:178px;height:31px;border:4px solid #e0161f;box-sizing:border-box"></div>
</body></html>
